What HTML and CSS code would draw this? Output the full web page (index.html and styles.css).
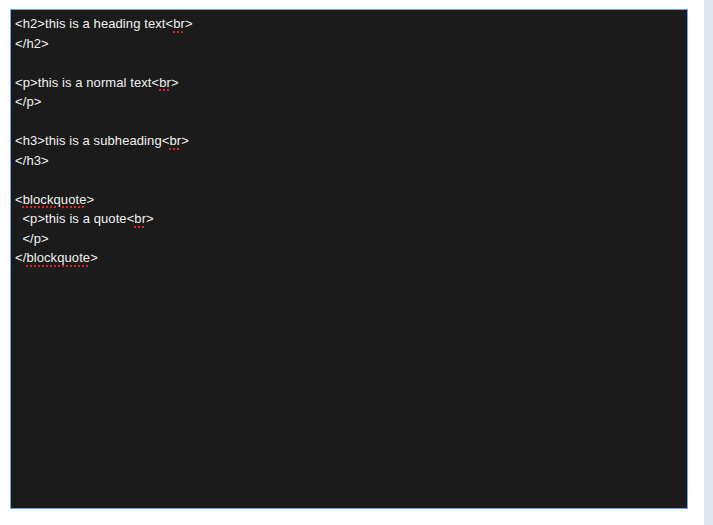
FILE: index.html
```html
<!DOCTYPE html>
<html>
<head>
<meta charset="utf-8">
<link rel="stylesheet" href="styles.css">
</head>
<body>
<div class="page">
  <div class="main">
    <div class="editor"><div class="code">&lt;h2&gt;this is a heading text&lt;<span class="sp">br</span>&gt;
&lt;/h2&gt;

&lt;p&gt;this is a normal text&lt;<span class="sp">br</span>&gt;
&lt;/p&gt;

&lt;h3&gt;this is a subheading&lt;<span class="sp">br</span>&gt;
&lt;/h3&gt;

&lt;<span class="sp">blockquote</span>&gt;
  &lt;p&gt;this is a quote&lt;<span class="sp">br</span>&gt;
  &lt;/p&gt;
&lt;/<span class="sp">blockquote</span>&gt;</div></div>
  </div>
  <div class="strip"></div>
</div>
</body>
</html>
```
FILE: styles.css
```css
html, body {
  margin: 0;
  padding: 0;
  background: #ffffff;
}
.page {
  display: flex;
  height: 525px;
}
.main {
  flex: 1;
  padding: 9px 0 0 10px;
}
.editor {
  width: 676px;
  height: 498px;
  border: 1px solid #6aa7ea;
  background: #1b1b1b;
  box-sizing: content-box;
}
.code {
  padding: 4px 0 0 4px;
  white-space: pre;
  font-family: "Liberation Sans", Arial, sans-serif;
  font-size: 13px;
  letter-spacing: 0.09px;
  line-height: 19.5px;
  color: #f2f2f2;
}
.sp {
  text-decoration: underline dotted #e0201a;
  text-decoration-thickness: 2px;
  text-underline-offset: 3px;
}
.strip {
  width: 9px;
  background: #dfe6f0;
}
```
